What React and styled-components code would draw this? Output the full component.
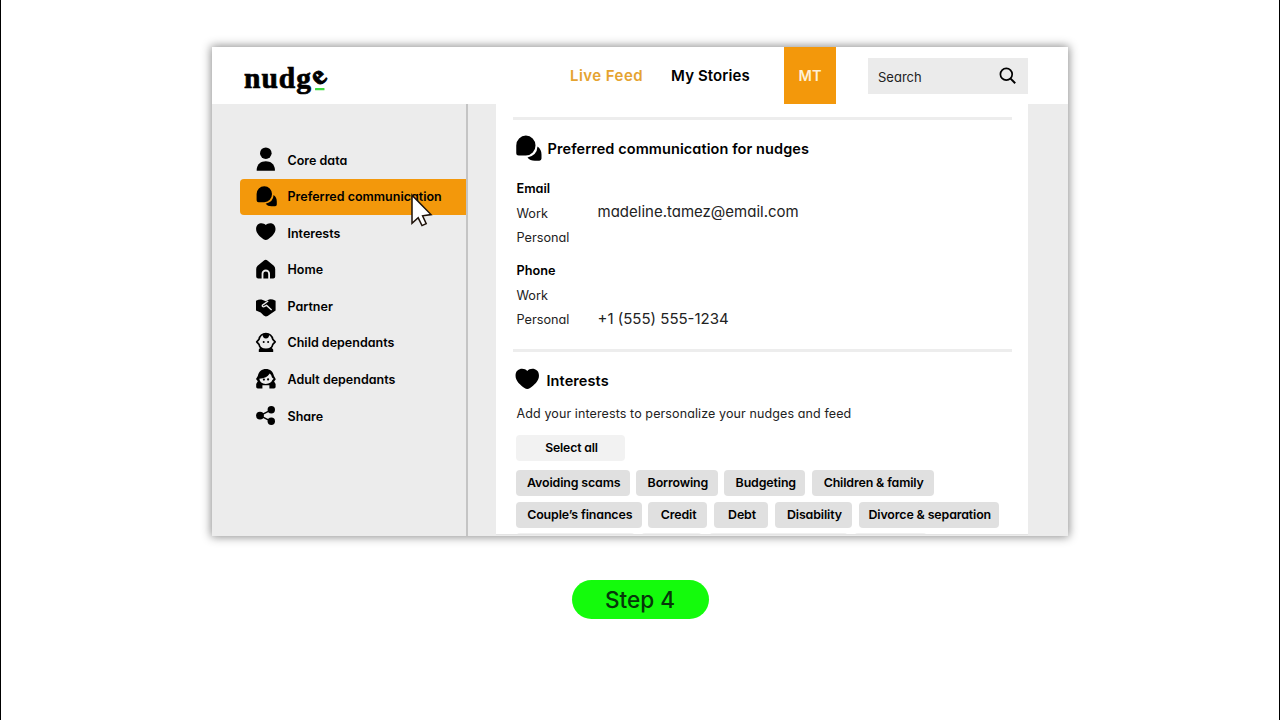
import styled, { createGlobalStyle } from 'styled-components';

const NAV_ITEMS = [
  { id: 'core', label: 'Core data', icon: PersonIcon },
  { id: 'communication', label: 'Preferred communication', icon: ChatIcon },
  { id: 'interests', label: 'Interests', icon: HeartIcon },
  { id: 'home', label: 'Home', icon: HomeIcon },
  { id: 'partner', label: 'Partner', icon: PartnerIcon },
  { id: 'child', label: 'Child dependants', icon: ChildIcon },
  { id: 'adult', label: 'Adult dependants', icon: AdultIcon },
  { id: 'share', label: 'Share', icon: ShareIcon },
];

const CONTACTS = [
  { title: 'Email', work: 'madeline.tamez@email.com', personal: '' },
  { title: 'Phone', work: '', personal: '+1 (555) 555-1234' },
];

const INTERESTS = [
  [
    { label: 'Avoiding scams', width: 113.5 },
    { label: 'Borrowing', width: 82 },
    { label: 'Budgeting', width: 81 },
    { label: 'Children & family', width: 122 },
  ],
  [
    { label: 'Couple’s finances', width: 125.5 },
    { label: 'Credit', width: 59.5 },
    { label: 'Debt', width: 54.5 },
    { label: 'Disability', width: 77.5 },
    { label: 'Divorce & separation', width: 140.5 },
  ],
];

// Chips of the next row, scrolled almost out of view
const CLIPPED_CHIPS = [119, 61, 139, 73];

function App() {
  return (
    <Page>
      <GlobalStyle />
      <Window>
        <Header>
          <Logo />
          <Menu>
            <MenuLink $active>Live Feed</MenuLink>
            <MenuLink>My Stories</MenuLink>
          </Menu>
          <Avatar>MT</Avatar>
          <Search>
            Search
            <SearchIcon />
          </Search>
        </Header>
        <Body>
          <Sidebar>
            {NAV_ITEMS.map(({ id, label, icon: Icon }) => (
              <NavItem key={id} $active={id === 'communication'}>
                <Icon />
                <NavLabel>{label}</NavLabel>
              </NavItem>
            ))}
          </Sidebar>
          <Panel>
            <Divider />
            <SectionTitle $height={57}>
              <ChatIcon size={30} />
              Preferred communication for nudges
            </SectionTitle>
            <Contacts>
              {CONTACTS.map(({ title, work, personal }) => (
                <ContactGroup key={title}>
                  <ContactTitle>{title}</ContactTitle>
                  <ContactRow>
                    <ContactLabel>Work</ContactLabel>
                    <ContactValue>{work}</ContactValue>
                  </ContactRow>
                  <ContactRow>
                    <ContactLabel>Personal</ContactLabel>
                    <ContactValue>{personal}</ContactValue>
                  </ContactRow>
                </ContactGroup>
              ))}
            </Contacts>
            <Divider />
            <SectionTitle $height={57}>
              <HeartIcon size={29} />
              Interests
            </SectionTitle>
            <Hint>Add your interests to personalize your nudges and feed</Hint>
            <SelectAll>Select all</SelectAll>
            {INTERESTS.map((row) => (
              <ChipRow key={row[0].label}>
                {row.map(({ label, width }) => (
                  <Chip key={label} $width={width}>
                    {label}
                  </Chip>
                ))}
              </ChipRow>
            ))}
            <ChipRow $clipped>
              {CLIPPED_CHIPS.map((width) => (
                <Chip key={width} $width={width} $faded />
              ))}
            </ChipRow>
          </Panel>
        </Body>
        <Cursor width="24" height="36" viewBox="0 0 24 36">
          <path
            d="M2 2.2V30.4L8.2 24.8L12 32.6L16.2 30.6L12.6 22.8L21 21.6Z"
            fill="#fff"
            stroke="#1d1108"
            strokeWidth="1.5"
          />
        </Cursor>
      </Window>
      <Step>Step 4</Step>
    </Page>
  );
}

export default App;

function Logo() {
  return (
    <LogoSvg width="90" height="46" viewBox="0 0 90 46">
      <text x="0" y="32.2" fontSize="29.5" textLength="67" stroke="#000" strokeWidth="0.7">
        nudg
      </text>
      <text x="-5.8" y="6.2" fontSize="28" stroke="#000" strokeWidth="0.9" transform="translate(75.2 22.2) rotate(-42)">
        e
      </text>
      <rect x="71" y="32" width="9.5" height="2.3" rx="0.6" fill="#3fd93f" />
    </LogoSvg>
  );
}

function Icon({ size = 24, children }) {
  return (
    <IconSvg width={size} height={size} viewBox="0 0 24 24">
      {children}
    </IconSvg>
  );
}

function PersonIcon() {
  return (
    <Icon>
      <circle cx="11.8" cy="5.2" r="5.8" />
      <path d="M2.7 22.7V21C3.4 16 7 13.3 11.8 13.3S20.2 16 20.9 21V22.7Z" />
    </Icon>
  );
}

function ChatIcon({ size }) {
  return (
    <Icon size={size}>
      <path d="M10.3 1.2A7.7 7.9 0 0 1 18 9.1A7.9 8 0 0 1 10.3 17.2H4.6Q2.6 17.2 2.6 15.2V9.1A7.7 7.9 0 0 1 10.3 1.2Z" />
      <path d="M19.6 10Q22.8 12.2 22.8 16.4V19.6Q22.8 21.3 21.1 21.3H17.4Q13.6 21.3 11.6 18.7Q19.2 17.2 19.6 10Z" />
    </Icon>
  );
}

function HeartIcon({ size }) {
  return (
    <Icon size={size}>
      <path d="M11.8 4.1C9.4 1 2.1 1.3 2.1 8C2.1 12.6 6.3 15.8 9.5 18.2Q11.8 19.8 14.1 18.2C17.3 15.8 21.5 12.6 21.5 8C21.5 1.3 14.2 1 11.8 4.1Z" />
    </Icon>
  );
}

function HomeIcon() {
  return (
    <Icon>
      <path d="M10 2.4Q11.7 1.1 13.4 2.4L19.8 7.7Q21.2 9.1 21.2 11.1V18.5Q21.2 20.5 19.2 20.5H16V15.6A4.2 4.2 0 0 0 7.6 15.6V20.5H4.2Q2.2 20.5 2.2 18.5V11.1Q2.2 9.1 3.6 7.7Z" />
      <path d="M9.4 20.5V15.8A2.4 2.4 0 0 1 14.2 15.8V20.5Z" />
    </Icon>
  );
}

function PartnerIcon() {
  return (
    <Icon>
      <path d="M2 5.8Q5.4 4 7.5 4.6L11.8 6.2L15 4.6Q17.5 3.8 21.6 5.8V15.5L13.6 20.9Q11.6 22 9.7 20.6L6.7 17.6L2 15.5Z" />
      <path
        d="M14.2 6L8.4 10.3Q7.9 11.7 9.7 11.9L12.6 10.4L17.6 15"
        fill="none"
        stroke="#ececec"
        strokeWidth="1.4"
      />
    </Icon>
  );
}

function ChildIcon() {
  return (
    <Icon>
      <path
        d="M5 8.4A7 7 0 0 1 18.8 8.4L21.2 10.8L18.8 13.3A7 7 0 0 1 5 13.3L2.7 10.8Z"
        fill="none"
        stroke="#000"
        strokeWidth="1.7"
        strokeLinejoin="round"
      />
      <path d="M8.4 3.2Q12 1.4 15.4 3.2Q15 7.4 11.9 7.6Q8.8 7.4 8.4 3.2Z" />
      <circle cx="9.7" cy="10.9" r="1" />
      <circle cx="14.1" cy="10.9" r="1" />
      <path d="M6.8 15.9Q12 19 17 15.9L19.2 18.4V21H4.8V18.4Z" />
    </Icon>
  );
}

function AdultIcon() {
  return (
    <Icon>
      <path d="M3.8 8C4.7 3.6 7.8 1 11.9 1S19.1 3.6 20 8L21.8 11.3L20.1 13.4L21.6 16V19Q21.5 20.4 20 20.4H15.4V17.2H8.4V20.4H3.8Q2.2 20.4 2.2 19V16L3.8 13.2L2 11Z" />
      <path
        d="M15.8 5.4Q12.8 10.1 5.3 10.8Q6 15.6 11.8 15.9Q17.1 15.6 18.2 12.2L19.6 10.8L18 9.4Q17.6 6.9 15.8 5.4Z"
        fill="#ececec"
      />
      <circle cx="9.9" cy="11.6" r="1.1" />
      <circle cx="14.1" cy="11.4" r="1.1" />
    </Icon>
  );
}

function ShareIcon() {
  return (
    <Icon>
      <path d="M6 11.6L17.2 5.8M6 11.6L17.2 17.3" stroke="#000" strokeWidth="1.5" />
      <circle cx="6" cy="11.6" r="3.9" />
      <circle cx="17.3" cy="5.8" r="3.7" />
      <circle cx="17.3" cy="17.3" r="3.7" />
    </Icon>
  );
}

function SearchIcon() {
  return (
    <SearchSvg width="18" height="18" viewBox="0 0 18 18" fill="none" stroke="#000" strokeWidth="1.7">
      <circle cx="7.3" cy="7.3" r="5.9" />
      <path d="M11.6 11.6L16.2 16.2" strokeWidth="2" />
    </SearchSvg>
  );
}

const GlobalStyle = createGlobalStyle`
  * {
    box-sizing: border-box;
  }

  body {
    margin: 0;
    background: #fff;
    color: #000;
    font-family: Inter, 'Liberation Sans', sans-serif;
    font-feature-settings: 'cv11' 1;
  }
`;

const Page = styled.div`
  height: 720px;
  padding-top: 47px;
  border: 1px solid #000;
  border-width: 0 1px;

  display: flex;
  flex-direction: column;
  align-items: center;
`;

const Window = styled.div`
  position: relative;
  width: 856px;
  height: 489px;
  flex-shrink: 0;
  background: #ececec;
  box-shadow: 0 0 9px 1px rgba(0, 0, 0, 0.45);

  display: flex;
  flex-direction: column;
`;

const Header = styled.header`
  height: 57px;
  padding: 0 40px 0 32px;
  background: #fff;

  display: flex;
  align-items: center;
`;

const LogoSvg = styled.svg`
  margin-top: 6px;
  font-family: 'Liberation Serif', serif;
  font-weight: 700;
  overflow: visible;
`;

const Menu = styled.nav`
  margin-left: 236px;
  width: 214px;

  display: flex;
  gap: 28px;
`;

const MenuLink = styled.a`
  color: ${({ $active }) => ($active ? '#e5a32f' : '#000')};
  font-size: 15px;
  font-weight: 600;
  letter-spacing: ${({ $active }) => ($active ? '0.45px' : '0.1px')};
  white-space: nowrap;
`;

const Avatar = styled.div`
  width: 52px;
  height: 57px;
  background: #f3980b;

  color: #fdf0d8;
  font-size: 14.5px;
  font-weight: 600;

  display: flex;
  align-items: center;
  justify-content: center;
`;

const Search = styled.div`
  width: 160px;
  height: 36px;
  margin-left: 32px;
  padding: 2px 11px 0 10px;
  background: #ebebeb;

  color: #222;
  font-size: 13px;

  display: flex;
  align-items: center;
  justify-content: space-between;
`;

const SearchSvg = styled.svg`
  margin-bottom: 2px;
`;

const Body = styled.div`
  height: 432px;

  display: flex;
`;

const Sidebar = styled.aside`
  width: 256px;
  padding: 38px 0 0 28px;
  border-right: 2px solid #c4c4c4;
`;

const NavItem = styled.div`
  height: 36.6px;
  padding-left: 14px;
  border-radius: 4px 0 0 4px;
  background: ${({ $active }) => ($active ? '#f3980b' : 'transparent')};

  display: flex;
  align-items: center;
  gap: 9.5px;
`;

const NavLabel = styled.span`
  padding-bottom: 0.6px;
  font-size: 12.5px;
  font-weight: 600;
  white-space: nowrap;
`;

const IconSvg = styled.svg`
  flex-shrink: 0;
  overflow: visible;
`;

const Panel = styled.main`
  width: 532px;
  height: 431px;
  margin-left: 28px;
  padding: 13px 16px 0 17px;
  border-bottom: 1px solid #e4e4e4;
  background: #fff;
  overflow: hidden;
`;

const Divider = styled.div`
  height: 2.5px;
  background: #ededed;
`;

const SectionTitle = styled.h2`
  height: ${({ $height }) => $height}px;
  margin: 0;
  font-size: 14.5px;
  font-weight: 600;
  letter-spacing: 0.09px;

  display: flex;
  align-items: center;
  gap: 4.5px;

  svg {
    margin-top: 1px;
  }
`;

const Contacts = styled.div`
  height: 172.5px;
`;

const ContactGroup = styled.section`
  height: 82.3px;
  padding-left: 3.5px;
`;

const ContactTitle = styled.h3`
  margin: 0;
  font-size: 12.7px;
  font-weight: 600;
  line-height: 24.7px;
`;

const ContactRow = styled.div`
  height: 24.7px;
  margin-top: -0.4px;

  display: flex;
  align-items: center;
`;

const ContactLabel = styled.span`
  width: 81px;
  color: #222;
  font-size: 12.7px;
`;

const ContactValue = styled.span`
  color: #222;
  font-size: 15px;
  padding-bottom: 3px;
`;

const Hint = styled.p`
  margin: 0 0 0 3.5px;
  color: #222;
  font-size: 12.5px;
  letter-spacing: 0.11px;
  line-height: 10px;
`;

const SelectAll = styled.button`
  width: 109px;
  height: 26px;
  margin: 16px 0 3px 3px;
  padding: 0 0 0 2px;
  border: none;
  border-radius: 4px;
  background: #f2f2f2;

  color: #000;
  font: inherit;
  font-size: 12.2px;
  font-weight: 600;
  letter-spacing: -0.15px;
`;

const ChipRow = styled.div`
  margin: ${({ $clipped }) => ($clipped ? 5 : 6)}px 0 0 3px;

  display: flex;
  gap: 6.4px;
`;

const Chip = styled.span`
  width: ${({ $width }) => $width}px;
  height: 26px;
  padding-left: 2px;
  flex-shrink: 0;
  border-radius: 4px;
  background: ${({ $faded }) => ($faded ? '#f0f0f0' : '#e0e0e0')};

  font-size: 12.4px;
  font-weight: 600;
  letter-spacing: -0.13px;
  white-space: nowrap;

  display: flex;
  align-items: center;
  justify-content: center;
`;

const Cursor = styled.svg`
  position: absolute;
  left: 198px;
  top: 146px;
`;

const Step = styled.div`
  width: 137px;
  height: 39px;
  margin-top: 43.5px;
  border-radius: 20px;
  background: #14fb0c;

  color: #06370a;
  font-size: 22.6px;
  font-weight: 500;

  display: flex;
  align-items: center;
  justify-content: center;
`;
